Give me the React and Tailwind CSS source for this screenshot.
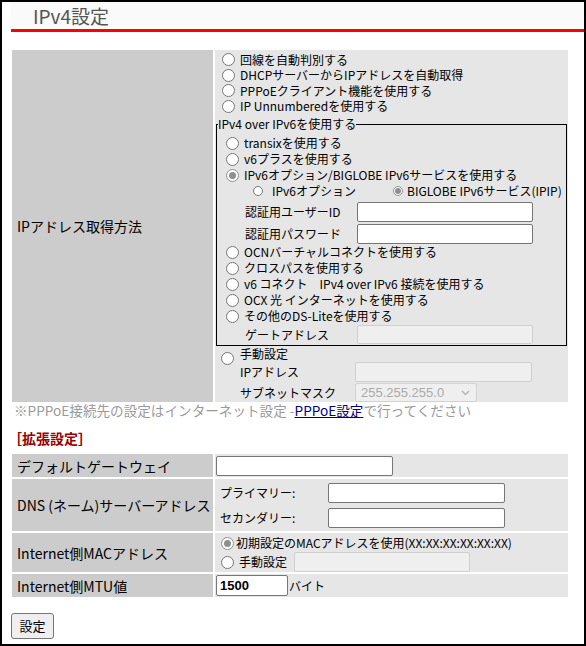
import React from 'react';

function Radio({ checked, size = 13 }) {
  const box = size === 13 ? 'w-[13px] h-[13px]' : 'w-[10px] h-[10px]';
  const dot = size === 13 ? 'w-[7px] h-[7px]' : 'w-[6px] h-[6px]';
  return (
    <span
      className={`inline-flex items-center justify-center rounded-full border bg-white shrink-0 ${box} ${
        checked ? 'border-[#8f8f8f]' : 'border-[#767676]'
      }`}
    >
      {checked && <span className={`rounded-full bg-[#8f8f8f] ${dot}`} />}
    </span>
  );
}

function Opt({ checked, children, pad = 'pl-[7px]' }) {
  return (
    <div className={`flex items-center h-[15.5px] gap-[5px] ${pad}`}>
      <Radio checked={checked} />
      <span className="whitespace-nowrap">{children}</span>
    </div>
  );
}

function TextBox({ w, h = 'h-[20px]', disabled, value }) {
  return (
    <div
      className={`${w} ${h} rounded-[2px] border flex items-center px-[3px] ${
        disabled ? 'bg-[#efefef] border-[#cfcfcf]' : 'bg-white border-[#767676]'
      }`}
    >
      {value && (
        <span className="font-['Liberation_Sans',sans-serif] text-[13px] font-semibold">{value}</span>
      )}
    </div>
  );
}

function App() {
  return (
    <div className="w-[586px] h-[646px] border-2 border-black bg-white text-black font-['Noto_Sans_CJK_JP',sans-serif] overflow-hidden">
      {/* Header */}
      <div className="ml-[9px]">
        <div className="h-[27px] bg-[#fafafa] pl-[22px] flex items-center">
          <span className="text-[19px] leading-[20px] text-[#555555]">IPv4設定</span>
        </div>
        <div className="h-[3px] bg-[#ff0000]" />
      </div>

      <div className="pl-[10px] w-[566px]">
        {/* IPアドレス取得方法 */}
        <div className="mt-[18px] grid grid-cols-[201px_1fr] gap-x-[2px]">
          <div className="bg-[#cccccc] flex items-center pl-[5px] text-[14px]">IPアドレス取得方法</div>
          <div className="bg-[#e6e6e6] text-[12px] leading-[14px] pt-[2px]">
            <Opt>回線を自動判別する</Opt>
            <Opt>DHCPサーバーからIPアドレスを自動取得</Opt>
            <Opt>PPPoEクライアント機能を使用する</Opt>
            <Opt>IP Unnumberedを使用する</Opt>

            <fieldset className="border border-black mx-[1px] mt-[3px]">
              <legend className="ml-[1px] p-0 leading-[14px] text-[12px]">IPv4 over IPv6を使用する</legend>
              <div className="pt-[4px] pb-[1px]">
                <div className="[&>div]:h-[16px]">
                  <Opt pad="pl-[9px]">transixを使用する</Opt>
                  <Opt pad="pl-[9px]">v6プラスを使用する</Opt>
                  <Opt pad="pl-[9px]" checked>IPv6オプション/BIGLOBE IPv6サービスを使用する</Opt>
                  <div className="flex items-center pl-[36px]">
                    <div className="w-[140px] flex items-center gap-[9px]">
                      <Radio size={10} />
                      <span>IPv6オプション</span>
                    </div>
                    <div className="flex items-center gap-[4px]">
                      <Radio size={10} checked />
                      <span className="whitespace-nowrap">BIGLOBE IPv6サービス(IPIP)</span>
                    </div>
                  </div>
                </div>
                <div className="flex items-center pl-[28px] mt-[3px]">
                  <span className="w-[112px]">認証用ユーザーID</span>
                  <TextBox w="w-[176px]" />
                </div>
                <div className="flex items-center pl-[28px] mt-[2px]">
                  <span className="w-[112px]">認証用パスワード</span>
                  <TextBox w="w-[176px]" />
                </div>
                <div className="[&>div]:h-[16px]">
                  <Opt pad="pl-[9px]">OCNバーチャルコネクトを使用する</Opt>
                  <Opt pad="pl-[9px]">クロスパスを使用する</Opt>
                  <Opt pad="pl-[9px]">v6 コネクト　IPv4 over IPv6 接続を使用する</Opt>
                  <Opt pad="pl-[9px]">OCX 光 インターネットを使用する</Opt>
                  <Opt pad="pl-[9px]">その他のDS-Liteを使用する</Opt>
                </div>
                <div className="flex items-center pl-[28px] mt-[1px]">
                  <span className="w-[112px]">ゲートアドレス</span>
                  <TextBox w="w-[176px]" h="h-[19px]" disabled />
                </div>
              </div>
            </fieldset>

            <div className="flex pl-[6px] pt-[1px] gap-[6px]">
              <div className="mt-[5px]">
                <Radio />
              </div>
              <div>
                <div className="leading-[14px]">手動設定</div>
                <div className="flex items-center mt-[1px]">
                  <span className="w-[115px]">IPアドレス</span>
                  <TextBox w="w-[177px]" disabled />
                </div>
                <div className="flex items-center mt-[1px]">
                  <span className="w-[115px]">サブネットマスク</span>
                  <div className="w-[122px] h-[19px] rounded-[2px] border border-[#d2d2d2] bg-[#efefef] flex items-center justify-between pl-[5px] pr-[6px]">
                    <span className="font-['Liberation_Sans',sans-serif] text-[13px] text-[#aaaaaa]">255.255.255.0</span>
                    <svg width="9" height="6" viewBox="0 0 9 6" fill="none" stroke="#b5b5b5" strokeWidth="1.5">
                      <path d="M1 1l3.5 3.5L8 1" />
                    </svg>
                  </div>
                </div>
              </div>
            </div>
          </div>
        </div>

        <div className="text-[13.6px] leading-[16px] text-[#9a9a9a] pl-[2px] whitespace-nowrap">
          ※PPPoE接続先の設定はインターネット設定 -
          <span className="text-[#000080] underline">PPPoE設定</span>で行ってください
        </div>

        <div className="mt-[11px] ml-[-4px] text-[14px] leading-[18px] font-bold text-[#990000]">［拡張設定］</div>

        {/* 拡張設定 */}
        <div className="mt-[7px] grid grid-cols-[201px_1fr] gap-[2px] text-[12px] leading-[14px]">
          <div className="bg-[#cccccc] h-[23px] flex items-center pl-[5px] text-[14px]">デフォルトゲートウェイ</div>
          <div className="bg-[#e6e6e6] flex items-center pl-[1px]">
            <TextBox w="w-[177px]" />
          </div>

          <div className="bg-[#cccccc] flex items-center pl-[5px] text-[14px]">DNS (ネーム)サーバーアドレス</div>
          <div className="bg-[#e6e6e6] pl-[5px] pt-[4px] pb-[3px]">
            <div className="flex items-center">
              <span className="w-[108px]">プライマリー:</span>
              <TextBox w="w-[177px]" />
            </div>
            <div className="flex items-center mt-[5px]">
              <span className="w-[108px]">セカンダリー:</span>
              <TextBox w="w-[177px]" />
            </div>
          </div>

          <div className="bg-[#cccccc] flex items-center pl-[5px] text-[14px]">Internet側MACアドレス</div>
          <div className="bg-[#e6e6e6] pl-[6px] pt-[2px]">
            <div className="flex items-center h-[16px] gap-[2px]">
              <Radio checked />
              <span className="whitespace-nowrap">初期設定のMACアドレスを使用(XX:XX:XX:XX:XX:XX)</span>
            </div>
            <div className="flex items-center mt-[1px]">
              <Radio />
              <span className="ml-[5px] w-[55px]">手動設定</span>
              <TextBox w="w-[176px]" disabled />
            </div>
          </div>

          <div className="bg-[#cccccc] h-[23px] flex items-center pl-[5px] text-[14px]">Internet側MTU値</div>
          <div className="bg-[#e6e6e6] flex items-center pl-[1px]">
            <TextBox w="w-[72px]" h="h-[21px]" value="1500" />
            <span className="ml-[1px]">バイト</span>
          </div>
        </div>

        <button
          type="button"
          className="mt-[16px] ml-[-1px] w-[43px] h-[26px] rounded-[3px] border border-[#767676] bg-[#efefef] text-[13px] leading-[16px]"
        >
          設定
        </button>
      </div>
    </div>
  );
}

export default App;
